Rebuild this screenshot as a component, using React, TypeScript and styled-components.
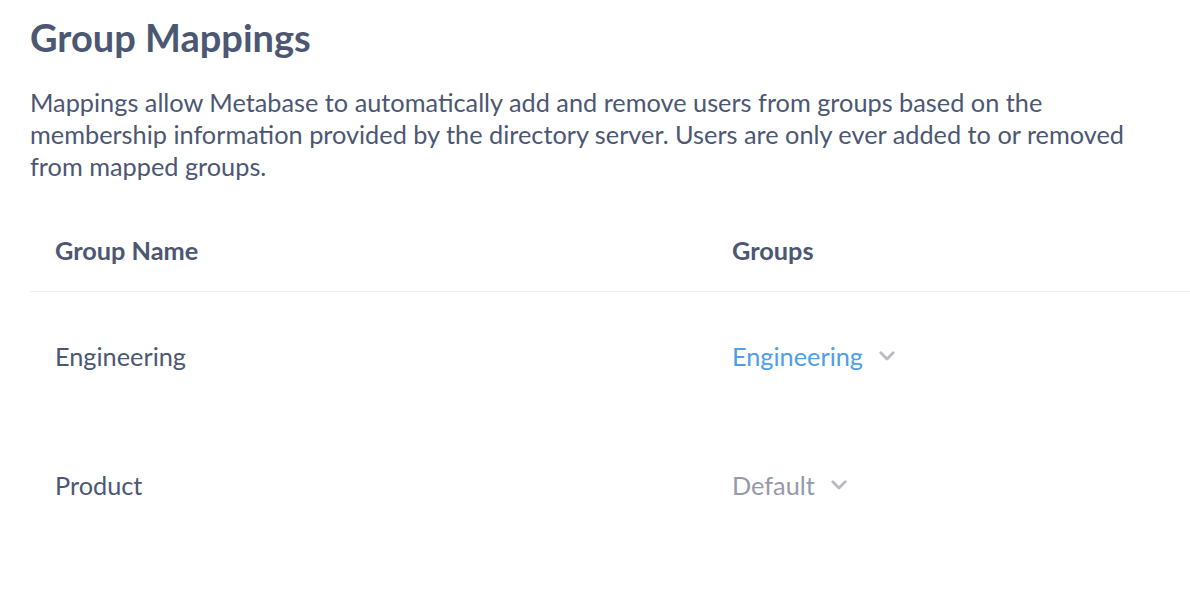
import React from "react";
import styled, { createGlobalStyle } from "styled-components";

const Global = createGlobalStyle`
  html, body { margin: 0; padding: 0; background: #fff; }
  body { font-family: Lato, "Noto Sans", sans-serif; color: #4c5773; -webkit-font-smoothing: antialiased; }
`;

const Page = styled.div`
  padding: 14px 0 0 30px;
`;

const Title = styled.h2`
  margin: 0;
  font-size: 38px;
  line-height: 46px;
  font-weight: 700;
  color: #4c5773;
`;

const Description = styled.p`
  margin: 26px 0 0;
  max-width: 1130px;
  font-size: 25.3px;
  line-height: 32px;
  color: #4c5773;
`;

const Table = styled.table`
  margin-top: 52px;
  width: 100%;
  border-collapse: collapse;
`;

const HeadCell = styled.th<{ $w?: string }>`
  box-sizing: border-box;
  text-align: left;
  font-size: 25.3px;
  line-height: 32px;
  font-weight: 700;
  color: #4c5773;
  padding: 0 0 25px 25px;
  border-bottom: 1px solid #edf0f2;
  width: ${(p) => p.$w || "auto"};
`;

const Cell = styled.td`
  box-sizing: border-box;
  font-size: 25.3px;
  line-height: 32px;
  color: #4c5773;
  padding: 0 0 1px 25px;
  height: 129px;
  vertical-align: middle;
`;

const Picker = styled.span<{ $active?: boolean }>`
  display: inline-flex;
  align-items: center;
  gap: 16px;
  color: ${(p) => (p.$active ? "#509ee3" : "#949aab")};
  cursor: pointer;
`;

const Chevron = () => (
  <svg width="16" height="10" viewBox="0 0 16 10" fill="none">
    <path d="M1.8 1.8 L8 8 L14.2 1.8" stroke="#b8bbc3" strokeWidth="2.8" strokeLinecap="round" strokeLinejoin="round" />
  </svg>
);

const rows = [
  { name: "Engineering", group: "Engineering", active: true },
  { name: "Product", group: "Default", active: false },
];

export default function App() {
  return (
    <>
      <Global />
      <Page>
        <Title>Group Mappings</Title>
        <Description>
          Mappings allow Metabase to automatically add and remove users from groups based on the
          membership information provided by the directory server. Users are only ever added to or removed
          from mapped groups.
        </Description>
        <Table>
          <thead>
            <tr>
              <HeadCell $w="677px">Group Name</HeadCell>
              <HeadCell>Groups</HeadCell>
            </tr>
          </thead>
          <tbody>
            {rows.map((r) => (
              <tr key={r.name}>
                <Cell>{r.name}</Cell>
                <Cell>
                  <Picker $active={r.active}>
                    {r.group}
                    <Chevron />
                  </Picker>
                </Cell>
              </tr>
            ))}
          </tbody>
        </Table>
      </Page>
    </>
  );
}
